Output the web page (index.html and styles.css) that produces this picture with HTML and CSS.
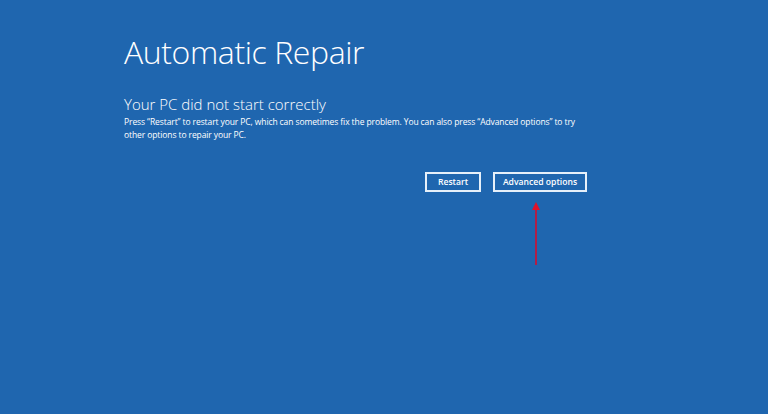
FILE: index.html
```html
<!DOCTYPE html>
<html>
<head>
  <title>Automatic Repair</title>
  <link rel="stylesheet" href="styles.css">
</head>
<body>
  <div class="screen">
    <h1 class="title">Automatic Repair</h1>
    <h2 class="subtitle">Your PC did not start correctly</h2>
    <p class="message">Press “Restart” to restart your PC, which can sometimes fix the problem. You can also press “Advanced options” to try other options to repair your PC.</p>
    <div class="actions">
      <button class="btn btn-restart">Restart</button>
      <div class="advanced-wrap">
        <button class="btn btn-advanced">Advanced options</button>
        <svg class="arrow" width="10" height="64" viewBox="0 0 10 64">
          <line x1="5" y1="6" x2="5" y2="63" stroke="#b01e48" stroke-width="2"/>
          <polygon points="5,0 9,8 1,8" fill="#e3122a"/>
        </svg>
      </div>
    </div>
  </div>
</body>
</html>
```

FILE: styles.css
```css
* {
  box-sizing: border-box;
}
body {
  margin: 0;
  background-color: #1f66af;
  font-family: "Open Sans", "Noto Sans", sans-serif;
  color: #ffffff;
  width: 768px;
  height: 414px;
  overflow: hidden;
}
.screen {
  width: 463px;
  margin-left: 124px;
  padding-top: 30px;
}
.title {
  font-size: 32px;
  font-weight: 300;
  margin: 0;
  line-height: 44px;
  letter-spacing: -0.4px;
}
.subtitle {
  font-size: 15px;
  font-weight: 300;
  margin: 20px 0 0 0;
  line-height: 20px;
}
.message {
  font-size: 8.5px;
  line-height: 13px;
  letter-spacing: -0.1px;
  margin: 1px 0 0 0;
}
.actions {
  display: flex;
  justify-content: flex-end;
  align-items: flex-start;
  gap: 12px;
  margin-top: 31px;
}
.btn {
  display: block;
  background: transparent;
  border: 2px solid #e6f0fa;
  color: #ffffff;
  font-family: "Open Sans", "Noto Sans", sans-serif;
  font-weight: 600;
  font-size: 8.6px;
  height: 20px;
  padding: 0;
  cursor: pointer;
}
.btn-restart {
  width: 56px;
}
.btn-advanced {
  width: 94px;
}
.advanced-wrap {
  position: relative;
  display: flex;
}
.arrow {
  position: absolute;
  left: 38px;
  top: 30px;
}
```
